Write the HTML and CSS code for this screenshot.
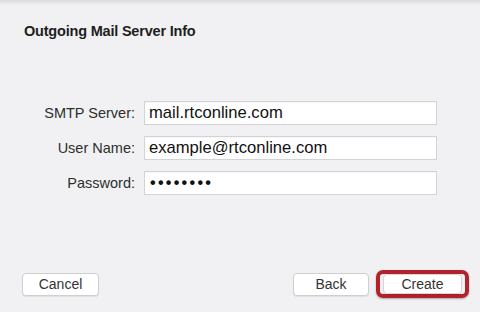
FILE: index.html
```html
<!DOCTYPE html>
<html>
<head>
<meta charset="utf-8">
<link rel="stylesheet" href="styles.css">
</head>
<body>
<div class="window">
  <div class="topbar"></div>
  <h1 class="title">Outgoing Mail Server Info</h1>
  <div class="form">
    <label class="label">SMTP Server:</label>
    <div class="field">mail.rtconline.com</div>
    <label class="label">User Name:</label>
    <div class="field">example@rtconline.com</div>
    <label class="label">Password:</label>
    <div class="field dots">&#8226;&#8226;&#8226;&#8226;&#8226;&#8226;&#8226;&#8226;</div>
  </div>
  <div class="footer">
    <button class="btn cancel">Cancel</button>
    <div class="right">
      <button class="btn back">Back</button>
      <div class="highlight"><button class="btn create">Create</button></div>
    </div>
  </div>
</div>
</body>
</html>
```
FILE: styles.css
```css
html, body {
  margin: 0;
  padding: 0;
}
body {
  width: 480px;
  height: 312px;
  overflow: hidden;
  background: #f1f1f3;
  font-family: "Liberation Sans", Arial, sans-serif;
  color: #222;
}
.window {
  display: flex;
  flex-direction: column;
  height: 312px;
}
.topbar {
  height: 5px;
  background: linear-gradient(#dcdcde, #f1f1f3);
}
.title {
  margin: 18px 0 0 24px;
  font-size: 14.5px;
  font-weight: bold;
  line-height: 17px;
  color: #1e1e1e;
  letter-spacing: -0.2px;
}
.form {
  display: grid;
  grid-template-columns: 135px 293px;
  column-gap: 9px;
  row-gap: 11px;
  margin-top: 61px;
  align-items: center;
}
.label {
  text-align: right;
  font-size: 14.5px;
  color: #2e2e2e;
}
.field {
  height: 22px;
  border: 1px solid #d3d3d5;
  background: #fff;
  box-shadow: inset 0 1px 1px rgba(0,0,0,0.04);
  font-size: 16.6px;
  line-height: 22px;
  padding-left: 4px;
  color: #111;
}
.dots {
  font-size: 16px;
  letter-spacing: 2.3px;
  font-weight: bold;
  padding-left: 5px;
}
.footer {
  margin-top: auto;
  display: flex;
  justify-content: space-between;
  align-items: center;
  padding: 0 11px 14px 22px;
}
.right {
  display: flex;
  align-items: center;
  gap: 7px;
}
.btn {
  font-family: "Liberation Sans", Arial, sans-serif;
  font-size: 14px;
  color: #333;
  background: #fff;
  border: 1px solid #cfcfd1;
  border-radius: 4px;
  height: 23px;
  padding: 0;
  box-shadow: 0 1px 1px rgba(0,0,0,0.08);
}
.cancel { width: 77px; }
.back { width: 76px; }
.highlight {
  border: 4px solid #b3212b;
  border-radius: 7px;
  padding: 0 3px;
  display: flex;
  box-shadow: 0 1px 2px rgba(0,0,0,0.3);
}
.create {
  width: 79px;
  height: 20px;
  border-color: #d6d6d8;
}
```
